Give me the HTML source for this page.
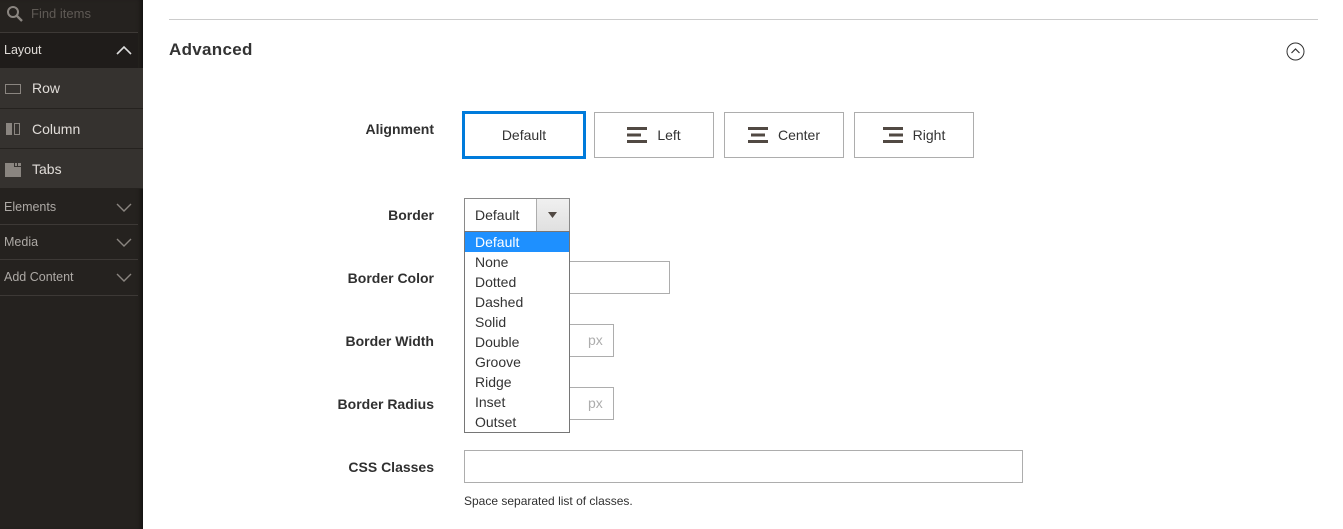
<!DOCTYPE html>
<html><head><meta charset="utf-8"><style>
*{box-sizing:border-box;margin:0;padding:0}
body{width:1343px;height:529px;overflow:hidden;background:#fff;font-family:"Liberation Sans","DejaVu Sans",sans-serif;color:#303030;position:relative}
.a{position:absolute}
#sb{left:0;top:0;width:143px;height:529px;background:#25221f;box-shadow:inset -5px 0 5px -3px rgba(0,0,0,.5)}
.sr{position:absolute;left:0;width:138px;border-bottom:1px solid #3d3936;color:#ada9a5;font-size:12.5px}
.it{background:#35322f;color:#e0dcd8;font-size:14px;border-bottom:1px solid #25221f}
.lbl{position:absolute;right:909px;font-size:14px;font-weight:bold;color:#303030;text-align:right;white-space:nowrap}
.btn{position:absolute;top:112px;height:46px;border:1px solid #adadad;font-size:14px;color:#333;display:flex;align-items:center;justify-content:center;gap:10px}
.inp{position:absolute;border:1px solid #adadad;background:#fff}
.px{position:absolute;color:#adadad;font-size:14px}
</style></head><body>
<div id="sb" class="a">
 <div class="sr" style="top:0;height:33px;">
  <svg class="a" style="left:6px;top:5px" width="18" height="18" viewBox="0 0 18 18"><circle cx="7" cy="7" r="5" fill="none" stroke="#8a8580" stroke-width="2"/><path d="M11 11l5 5" stroke="#8a8580" stroke-width="2.4"/></svg>
  <span class="a" style="left:31px;top:6px;color:#5f5a55;font-size:13px">Find items</span>
 </div>
 <div class="sr" style="top:33px;height:35px;background:#1f1c1a;color:#e0dcd8;border:none">
  <span class="a" style="left:4px;top:10px">Layout</span>
  <svg class="a" style="left:116px;top:12px" width="16" height="10"><path d="M1 9l7-7 7 7" fill="none" stroke="#ddd" stroke-width="1.6"/></svg>
 </div>
 <div class="sr it" style="top:68px;height:41px;width:143px"><svg class="a" style="left:5px;top:16px" width="16" height="10"><rect x=".5" y=".5" width="15" height="9" fill="none" stroke="#8a8580"/></svg><span class="a" style="left:32px;top:12px">Row</span></div>
 <div class="sr it" style="top:109px;height:40px;width:143px"><svg class="a" style="left:6px;top:14px" width="14" height="12"><rect x="0" y="0" width="6" height="12" fill="#8a8580"/><rect x="8.5" y=".5" width="5" height="11" fill="none" stroke="#8a8580"/></svg><span class="a" style="left:32px;top:12px">Column</span></div>
 <div class="sr it" style="top:149px;height:40px;width:143px"><svg class="a" style="left:5px;top:14px" width="16" height="14"><path d="M0 0h9v4h7v10H0z M10 0h2v3h-2z M13 0h3v3h-3z" fill="#8a8580"/></svg><span class="a" style="left:32px;top:12px">Tabs</span></div>
 <div class="sr" style="top:189px;height:36px"><span class="a" style="left:4px;top:11px">Elements</span><svg class="a" style="left:116px;top:14px" width="16" height="10"><path d="M1 1l7 7 7-7" fill="none" stroke="#8a8580" stroke-width="1.4"/></svg></div>
 <div class="sr" style="top:225px;height:35px"><span class="a" style="left:4px;top:10px">Media</span><svg class="a" style="left:116px;top:13px" width="16" height="10"><path d="M1 1l7 7 7-7" fill="none" stroke="#8a8580" stroke-width="1.4"/></svg></div>
 <div class="sr" style="top:260px;height:36px"><span class="a" style="left:4px;top:10px">Add Content</span><svg class="a" style="left:116px;top:13px" width="16" height="10"><path d="M1 1l7 7 7-7" fill="none" stroke="#8a8580" stroke-width="1.4"/></svg></div>
</div>

<div class="a" style="left:169px;top:19px;width:1149px;height:1px;background:#ccc"></div>
<div class="a" style="left:169px;top:40px;font-size:17px;font-weight:bold;color:#333;letter-spacing:.3px">Advanced</div>
<svg class="a" style="left:1286px;top:42px" width="19" height="19"><circle cx="9.5" cy="9.5" r="8.5" fill="none" stroke="#333" stroke-width="1"/><path d="M5.5 11l4-4 4 4" fill="none" stroke="#333" stroke-width="1.2"/></svg>

<div class="lbl" style="top:121px">Alignment</div>
<div class="btn" style="left:462px;width:124px;top:111px;height:48px;border:3px solid #007bdb">Default</div>
<div class="btn" style="left:594px;width:120px"><svg width="20" height="18"><rect y="1" width="20" height="3" fill="#514943"/><rect y="7.5" width="14" height="3" fill="#514943"/><rect y="14" width="20" height="3" fill="#514943"/></svg>Left</div>
<div class="btn" style="left:724px;width:120px"><svg width="20" height="18"><rect y="1" width="20" height="3" fill="#514943"/><rect x="3" y="7.5" width="14" height="3" fill="#514943"/><rect y="14" width="20" height="3" fill="#514943"/></svg>Center</div>
<div class="btn" style="left:854px;width:120px"><svg width="20" height="18"><rect y="1" width="20" height="3" fill="#514943"/><rect x="6" y="7.5" width="14" height="3" fill="#514943"/><rect y="14" width="20" height="3" fill="#514943"/></svg>Right</div>

<div class="lbl" style="top:207px">Border</div>
<div class="inp" style="left:464px;top:198px;width:106px;height:34px;border-color:#8a8a8a"><span class="a" style="left:10px;top:8px;font-size:14px">Default</span><div class="a" style="left:71px;top:0;width:33px;height:32px;background:linear-gradient(#f0f0f0,#e0e0e0);border-left:1px solid #adadad"></div><svg class="a" style="left:83px;top:13px" width="9" height="6"><path d="M0 0h9L4.5 6z" fill="#514943"/></svg></div>

<div class="lbl" style="top:270px">Border Color</div>
<div class="inp" style="left:464px;top:261px;width:206px;height:33px"></div>
<div class="lbl" style="top:333px">Border Width</div>
<div class="inp" style="left:464px;top:324px;width:150px;height:33px"></div><span class="px" style="left:588px;top:332px">px</span>
<div class="lbl" style="top:396px">Border Radius</div>
<div class="inp" style="left:464px;top:387px;width:150px;height:33px"></div><span class="px" style="left:588px;top:395px">px</span>

<div class="a" style="left:464px;top:231px;width:106px;height:202px;background:#fff;border:1px solid #767676;font-size:14px;color:#333;line-height:20px">
 <div style="background:#1e90ff;color:#fff;padding-left:10px">Default</div>
 <div style="padding-left:10px">None</div><div style="padding-left:10px">Dotted</div><div style="padding-left:10px">Dashed</div><div style="padding-left:10px">Solid</div><div style="padding-left:10px">Double</div><div style="padding-left:10px">Groove</div><div style="padding-left:10px">Ridge</div><div style="padding-left:10px">Inset</div><div style="padding-left:10px">Outset</div>
</div>

<div class="lbl" style="top:459px">CSS Classes</div>
<div class="inp" style="left:464px;top:450px;width:559px;height:33px"></div>
<div class="a" style="left:464px;top:494px;font-size:12px;color:#303030">Space separated list of classes.</div>
</body></html>
